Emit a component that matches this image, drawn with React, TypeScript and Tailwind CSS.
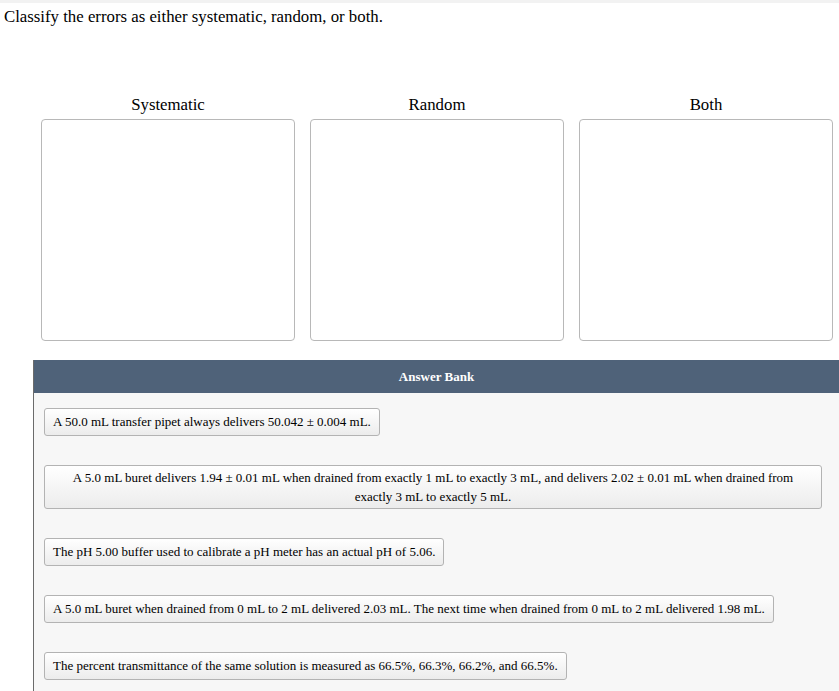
const columns = ["Systematic", "Random", "Both"];

const answers = [
  { text: "A 50.0 mL transfer pipet always delivers 50.042 ± 0.004 mL.", wide: false },
  {
    text: "A 5.0 mL buret delivers 1.94 ± 0.01 mL when drained from exactly 1 mL to exactly 3 mL, and delivers 2.02 ± 0.01 mL when drained from exactly 3 mL to exactly 5 mL.",
    wide: true,
  },
  { text: "The pH 5.00 buffer used to calibrate a pH meter has an actual pH of 5.06.", wide: false },
  {
    text: "A 5.0 mL buret when drained from 0 mL to 2 mL delivered 2.03 mL. The next time when drained from 0 mL to 2 mL delivered 1.98 mL.",
    wide: false,
  },
  {
    text: "The percent transmittance of the same solution is measured as 66.5%, 66.3%, 66.2%, and 66.5%.",
    wide: false,
  },
];

function AnswerChip({ text, wide }: { text: string; wide: boolean }) {
  return (
    <div
      className={
        wide
          ? "w-[778px] rounded-[3px] border border-[#b3b3b3] bg-gradient-to-b from-white to-[#ececec] px-[20px] py-[2px] text-center text-[13px] leading-[19px] text-black"
          : "rounded-[3px] border border-[#b3b3b3] bg-gradient-to-b from-white to-[#ececec] px-[8px] py-[4px] text-[13px] leading-[18px] text-black"
      }
    >
      {text}
    </div>
  );
}

export default function App() {
  return (
    <div className="relative h-[691px] w-[839px] overflow-hidden bg-white font-['Liberation_Serif','Times_New_Roman',serif]">
      <div className="h-[3px] bg-[#f2f2f2]" />
      <p className="mt-[4px] pl-[4px] text-[16.8px] leading-[19px] text-black">
        Classify the errors as either systematic, random, or both.
      </p>

      {/* drop targets */}
      <div className="mt-[69px] grid grid-cols-[254px_254px_254px] gap-x-[15px] pl-[41px]">
        {columns.map((name) => (
          <div key={name} className="flex flex-col">
            <div className="text-center text-[16.8px] leading-[19px] text-black">{name}</div>
            <div className="mt-[5px] h-[222px] rounded-[4px] border border-[#b8b8b8] bg-white" />
          </div>
        ))}
      </div>

      {/* answer bank */}
      <div className="ml-[33px] mt-[19px] border-l border-[#6b6b6b] bg-[#f7f7f7]">
        <div className="flex h-[33px] items-center justify-center bg-[#4f6279] text-[13px] font-bold text-white">
          Answer Bank
        </div>
        <div className="flex flex-col items-start gap-[29px] pb-[40px] pl-[10px] pt-[15px]">
          {answers.map((a) => (
            <AnswerChip key={a.text} text={a.text} wide={a.wide} />
          ))}
        </div>
      </div>
    </div>
  );
}
